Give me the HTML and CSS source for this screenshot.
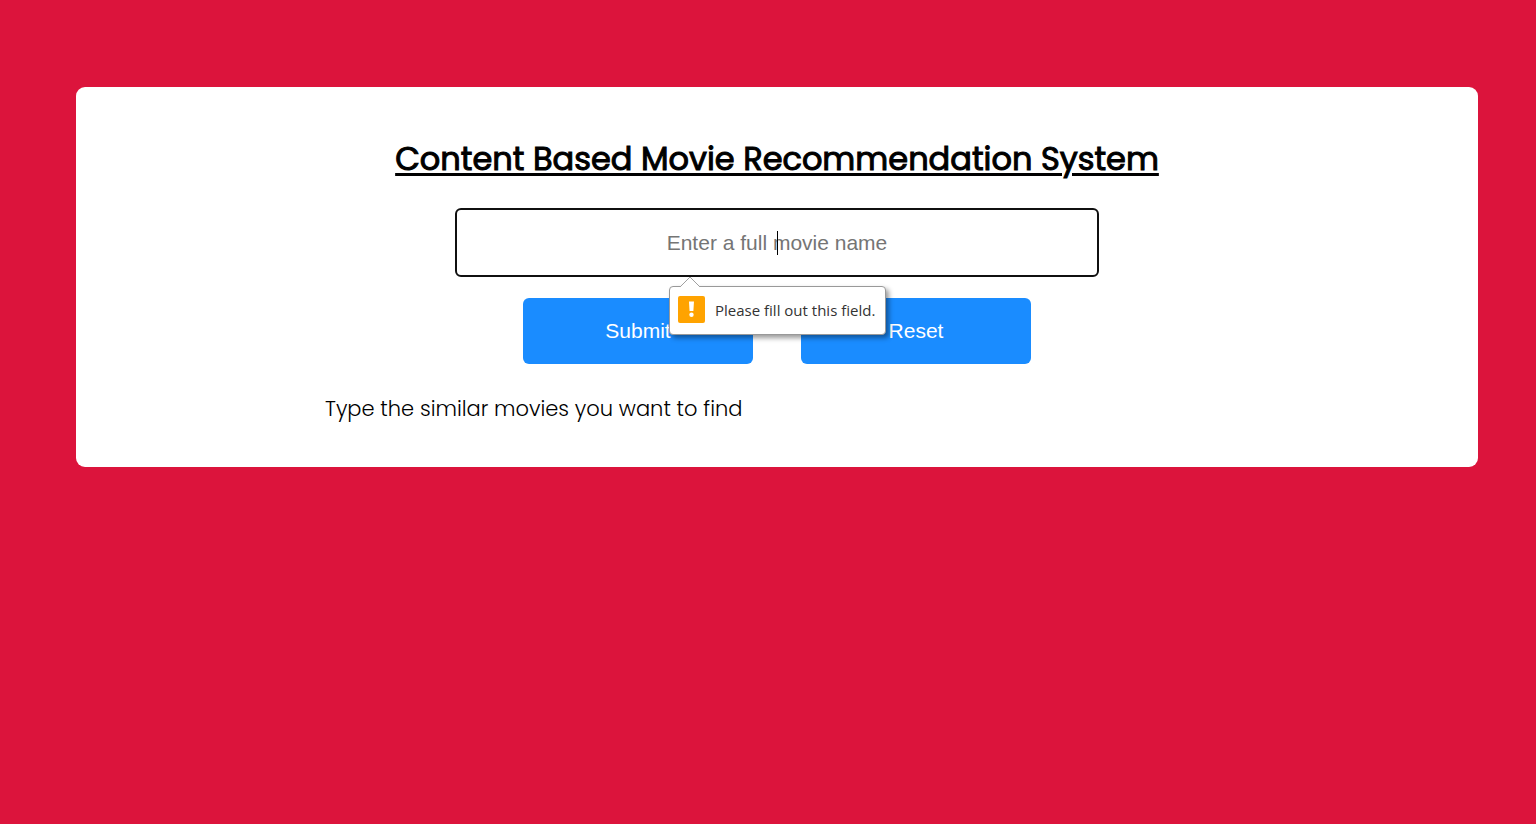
FILE: index.html
```html
<!DOCTYPE html>
<html lang="en">
<head>
    <meta charset="UTF-8">
    <meta name="viewport" content="width=device-width, initial-scale=1.0">
    <title>Movie Recommendation System</title>
    <link rel="stylesheet" href="styles.css">
</head>
<body>
    <main class="container">
        <h1>Content Based Movie Recommendation System</h1>
        <form class="search-form" novalidate>
            <div class="field">
                <input type="text" id="movie" name="movie" placeholder="Enter a full movie name" aria-label="Movie name" aria-describedby="movie-error" autocomplete="off" required>
                <span class="caret"></span>
                <div class="bubble" id="movie-error" role="alert">
                    <svg class="bubble-arrow" width="20" height="11" viewBox="0 0 20 11">
                        <path d="M0 11 L10 1 L20 11" fill="#fff" stroke="#a0a0a0"/>
                        <path d="M1 10.5 H19" stroke="#fff"/>
                    </svg>
                    <svg class="bubble-icon" width="27" height="27" viewBox="0 0 27 27">
                        <rect width="27" height="27" rx="2" fill="#ffa300"/>
                        <path d="M11 5.5 H16 L15.4 15 H11.6 Z" fill="#fff"/>
                        <circle cx="13.5" cy="18.8" r="2.2" fill="#fff"/>
                    </svg>
                    <span>Please fill out this field.</span>
                </div>
            </div>
            <div class="buttons">
                <button type="submit">Submit</button>
                <button type="reset">Reset</button>
            </div>
        </form>
        <p class="hint">Type the similar movies you want to find</p>
    </main>
</body>
</html>
```

FILE: styles.css
```css
* {
    margin: 0;
    padding: 0;
    box-sizing: border-box;
}

body {
    min-height: 100vh;
    padding: 87px 58px 40px 76px;
    background-color: #dc143c;
    font-family: Poppins, Inter, sans-serif;
    color: #000;
}

.container {
    padding: 48px 20px 40px;
    background-color: #fff;
    border-radius: 9px;
}

h1 {
    margin-bottom: 25px;
    font-size: 32px;
    font-weight: 400;
    line-height: 48px;
    text-align: center;
    text-decoration: underline;
    text-decoration-thickness: 3px;
    text-underline-offset: 3px;
    -webkit-text-stroke: 1px #000;
}

.field {
    position: relative;
    width: 100%;
    max-width: 644px;
    margin: 0 auto 21px;
}

input {
    display: block;
    width: 100%;
    height: 69px;
    border: 2px solid #101010;
    border-radius: 6px;
    outline: none;
    font-family: "Liberation Sans", Arial, sans-serif;
    font-size: 21px;
    text-align: center;
}

input::placeholder {
    color: #757575;
}

.caret {
    position: absolute;
    top: 23px;
    left: 50%;
    width: 1px;
    height: 24px;
    background-color: #000;
}

/* validation message */
.bubble {
    position: absolute;
    z-index: 1;
    top: 78px;
    left: 214px;
    display: flex;
    align-items: center;
    gap: 10px;
    height: 49px;
    padding: 0 10px 2px 8px;
    background-color: #fff;
    border: 1px solid #999;
    border-radius: 4px;
    box-shadow: 3px 3px 5px rgba(0, 0, 0, 0.4);
    font-family: "Segoe UI", "Open Sans", sans-serif;
    font-size: 15px;
    color: #333;
    white-space: nowrap;
}

.bubble-arrow {
    position: absolute;
    top: -11px;
    left: 10px;
}

.buttons {
    display: flex;
    justify-content: center;
    gap: 48px;
}

button {
    width: 230px;
    height: 66px;
    background-color: #1a8cff;
    border: none;
    border-radius: 6px;
    font-family: "Liberation Sans", Arial, sans-serif;
    font-size: 21px;
    color: #fff;
    cursor: pointer;
}

button:hover {
    background-color: #0073e6;
}

.hint {
    max-width: 904px;
    margin: 27px auto 0;
    font-size: 21px;
    font-weight: 300;
    line-height: 36px;
}
```
